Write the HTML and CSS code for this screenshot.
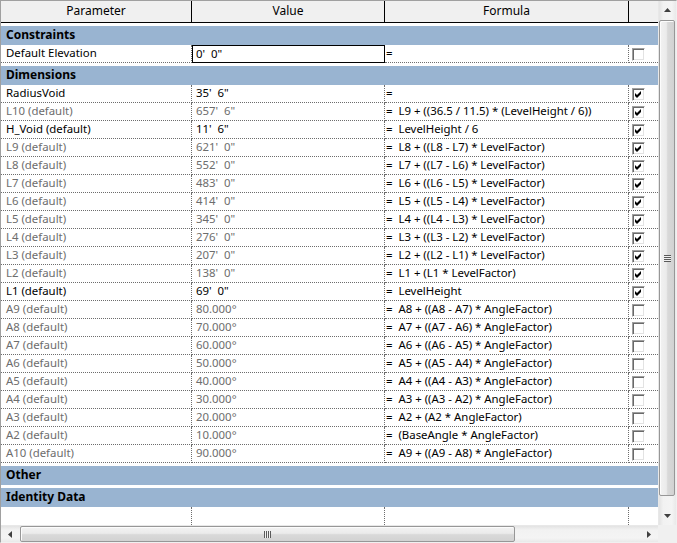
FILE: index.html
```html
<!DOCTYPE html>
<html>
<head>
<meta charset="utf-8">
<link rel="stylesheet" href="styles.css">
</head>
<body>
<div class="grid">
  <div class="main">
    <div class="table">
      <div class="head">
        <div class="h">Parameter</div>
        <div class="h">Value</div>
        <div class="h">Formula</div>
        <div class="h last"></div>
      </div>

      <div class="band">Constraints</div>
      <div class="row">
        <div class="c p">Default Elevation</div>
        <div class="c v edit">0'  0"</div>
        <div class="c f">=</div>
        <div class="c k"><span class="cb"></span></div>
      </div>

      <div class="band">Dimensions</div>
      <div class="row">
        <div class="c p">RadiusVoid</div>
        <div class="c v">35'  6"</div>
        <div class="c f">=</div>
        <div class="c k"><span class="cb"><svg viewBox="0 0 11 11" width="11" height="11"><polygon points="2,4 4,6 8,2 8,5 4,9 2,7"/></svg></span></div>
      </div>
      <div class="row gray">
        <div class="c p">L10 (default)</div>
        <div class="c v">657'  6"</div>
        <div class="c f">=  L9 + ((36.5 / 11.5) * (LevelHeight / 6))</div>
        <div class="c k"><span class="cb"><svg viewBox="0 0 11 11" width="11" height="11"><polygon points="2,4 4,6 8,2 8,5 4,9 2,7"/></svg></span></div>
      </div>
      <div class="row">
        <div class="c p">H_Void (default)</div>
        <div class="c v">11'  6"</div>
        <div class="c f">=  LevelHeight / 6</div>
        <div class="c k"><span class="cb"><svg viewBox="0 0 11 11" width="11" height="11"><polygon points="2,4 4,6 8,2 8,5 4,9 2,7"/></svg></span></div>
      </div>
      <div class="row gray">
        <div class="c p">L9 (default)</div>
        <div class="c v">621'  0"</div>
        <div class="c f">=  L8 + ((L8 - L7) * LevelFactor)</div>
        <div class="c k"><span class="cb"><svg viewBox="0 0 11 11" width="11" height="11"><polygon points="2,4 4,6 8,2 8,5 4,9 2,7"/></svg></span></div>
      </div>
      <div class="row gray">
        <div class="c p">L8 (default)</div>
        <div class="c v">552'  0"</div>
        <div class="c f">=  L7 + ((L7 - L6) * LevelFactor)</div>
        <div class="c k"><span class="cb"><svg viewBox="0 0 11 11" width="11" height="11"><polygon points="2,4 4,6 8,2 8,5 4,9 2,7"/></svg></span></div>
      </div>
      <div class="row gray">
        <div class="c p">L7 (default)</div>
        <div class="c v">483'  0"</div>
        <div class="c f">=  L6 + ((L6 - L5) * LevelFactor)</div>
        <div class="c k"><span class="cb"><svg viewBox="0 0 11 11" width="11" height="11"><polygon points="2,4 4,6 8,2 8,5 4,9 2,7"/></svg></span></div>
      </div>
      <div class="row gray">
        <div class="c p">L6 (default)</div>
        <div class="c v">414'  0"</div>
        <div class="c f">=  L5 + ((L5 - L4) * LevelFactor)</div>
        <div class="c k"><span class="cb"><svg viewBox="0 0 11 11" width="11" height="11"><polygon points="2,4 4,6 8,2 8,5 4,9 2,7"/></svg></span></div>
      </div>
      <div class="row gray">
        <div class="c p">L5 (default)</div>
        <div class="c v">345'  0"</div>
        <div class="c f">=  L4 + ((L4 - L3) * LevelFactor)</div>
        <div class="c k"><span class="cb"><svg viewBox="0 0 11 11" width="11" height="11"><polygon points="2,4 4,6 8,2 8,5 4,9 2,7"/></svg></span></div>
      </div>
      <div class="row gray">
        <div class="c p">L4 (default)</div>
        <div class="c v">276'  0"</div>
        <div class="c f">=  L3 + ((L3 - L2) * LevelFactor)</div>
        <div class="c k"><span class="cb"><svg viewBox="0 0 11 11" width="11" height="11"><polygon points="2,4 4,6 8,2 8,5 4,9 2,7"/></svg></span></div>
      </div>
      <div class="row gray">
        <div class="c p">L3 (default)</div>
        <div class="c v">207'  0"</div>
        <div class="c f">=  L2 + ((L2 - L1) * LevelFactor)</div>
        <div class="c k"><span class="cb"><svg viewBox="0 0 11 11" width="11" height="11"><polygon points="2,4 4,6 8,2 8,5 4,9 2,7"/></svg></span></div>
      </div>
      <div class="row gray">
        <div class="c p">L2 (default)</div>
        <div class="c v">138'  0"</div>
        <div class="c f">=  L1 + (L1 * LevelFactor)</div>
        <div class="c k"><span class="cb"><svg viewBox="0 0 11 11" width="11" height="11"><polygon points="2,4 4,6 8,2 8,5 4,9 2,7"/></svg></span></div>
      </div>
      <div class="row">
        <div class="c p">L1 (default)</div>
        <div class="c v">69'  0"</div>
        <div class="c f">=  LevelHeight</div>
        <div class="c k"><span class="cb"><svg viewBox="0 0 11 11" width="11" height="11"><polygon points="2,4 4,6 8,2 8,5 4,9 2,7"/></svg></span></div>
      </div>
      <div class="row gray">
        <div class="c p">A9 (default)</div>
        <div class="c v">80.000°</div>
        <div class="c f">=  A8 + ((A8 - A7) * AngleFactor)</div>
        <div class="c k"><span class="cb"></span></div>
      </div>
      <div class="row gray">
        <div class="c p">A8 (default)</div>
        <div class="c v">70.000°</div>
        <div class="c f">=  A7 + ((A7 - A6) * AngleFactor)</div>
        <div class="c k"><span class="cb"></span></div>
      </div>
      <div class="row gray">
        <div class="c p">A7 (default)</div>
        <div class="c v">60.000°</div>
        <div class="c f">=  A6 + ((A6 - A5) * AngleFactor)</div>
        <div class="c k"><span class="cb"></span></div>
      </div>
      <div class="row gray">
        <div class="c p">A6 (default)</div>
        <div class="c v">50.000°</div>
        <div class="c f">=  A5 + ((A5 - A4) * AngleFactor)</div>
        <div class="c k"><span class="cb"></span></div>
      </div>
      <div class="row gray">
        <div class="c p">A5 (default)</div>
        <div class="c v">40.000°</div>
        <div class="c f">=  A4 + ((A4 - A3) * AngleFactor)</div>
        <div class="c k"><span class="cb"></span></div>
      </div>
      <div class="row gray">
        <div class="c p">A4 (default)</div>
        <div class="c v">30.000°</div>
        <div class="c f">=  A3 + ((A3 - A2) * AngleFactor)</div>
        <div class="c k"><span class="cb"></span></div>
      </div>
      <div class="row gray">
        <div class="c p">A3 (default)</div>
        <div class="c v">20.000°</div>
        <div class="c f">=  A2 + (A2 * AngleFactor)</div>
        <div class="c k"><span class="cb"></span></div>
      </div>
      <div class="row gray">
        <div class="c p">A2 (default)</div>
        <div class="c v">10.000°</div>
        <div class="c f">=  (BaseAngle * AngleFactor)</div>
        <div class="c k"><span class="cb"></span></div>
      </div>
      <div class="row gray">
        <div class="c p">A10 (default)</div>
        <div class="c v">90.000°</div>
        <div class="c f">=  A9 + ((A9 - A8) * AngleFactor)</div>
        <div class="c k"><span class="cb"></span></div>
      </div>

      <div class="band">Other</div>
      <div class="band">Identity Data</div>
      <div class="row empty">
        <div class="c p"></div>
        <div class="c v"></div>
        <div class="c f"></div>
        <div class="c k"></div>
      </div>
    </div>

    <div class="vscroll">
      <div class="vbtn"><svg width="7" height="4" viewBox="0 0 7 4"><polygon points="0,4 3.5,0 7,4"/></svg></div>
      <div class="vthumb"><span class="grip-h"></span></div>
      <div class="vtrack"></div>
      <div class="vbtn"><svg width="7" height="4" viewBox="0 0 7 4"><polygon points="0,0 7,0 3.5,4"/></svg></div>
    </div>
  </div>

  <div class="hbar">
    <div class="hscroll">
      <div class="hbtn"><svg width="4" height="7" viewBox="0 0 4 7"><polygon points="4,0 0,3.5 4,7"/></svg></div>
      <div class="hthumb"><span class="grip-v"></span></div>
      <div class="htrack"></div>
      <div class="hbtn"><svg width="4" height="7" viewBox="0 0 4 7"><polygon points="0,0 4,3.5 0,7"/></svg></div>
    </div>
    <div class="corner"></div>
  </div>
</div>
</body>
</html>
```

FILE: styles.css
```css
* { box-sizing: border-box; }

body {
  margin: 0;
  font-family: "Noto Sans", "Open Sans", sans-serif;
  font-size: 11.4px;
  color: #000;
  background: #fff;
}

.grid {
  width: 677px;
  height: 543px;
  border: 1px solid;
  border-color: #a0a0a0 #f0f0f0 #f0f0f0 #a0a0a0;
  display: flex;
  flex-direction: column;
  background: #fff;
}

.main {
  display: flex;
  height: 524px;
}

.table {
  width: 657px;
  height: 524px;
  overflow: hidden;
}

.head,
.row {
  display: grid;
  grid-template-columns: 191px 193px 244px 29px;
}

.head {
  height: 22px;
  background: #f0f0f0;
  border-bottom: 1px solid #000;
}

.h {
  text-align: center;
  line-height: 20px;
  font-size: 12px;
  border-right: 1px solid #000;
}

.h.last { border-right: none; }

.band {
  margin-top: 3px;
  height: 19px;
  line-height: 18px;
  padding-left: 5px;
  background: #99b4d1;
  font-weight: bold;
  font-size: 12px;
}

.row { height: 18px; }

.c {
  height: 18px;
  line-height: 16px;
  border-right: 1px dotted #6d6d6d;
  border-bottom: 1px dotted #6d6d6d;
  white-space: pre;
  overflow: hidden;
}

.c.k { border-right: none; }

.p { padding-left: 5px; }
.v { padding-left: 4px; }
.f { padding-left: 1px; }

.v.edit {
  border: 1px solid #000;
  padding-left: 3px;
  line-height: 15px;
}

.row.gray .p,
.row.gray .v { color: #6d6d6d; }

.row.empty .c { border-bottom: none; }

.k { padding: 3px 0 0 3px; }

.cb {
  display: block;
  width: 13px;
  height: 13px;
  border: 1px solid;
  border-color: #a0a0a0 #fff #fff #a0a0a0;
  box-shadow: inset 1px 1px #696969, inset -1px -1px #e3e3e3;
  background: #fff;
}

.cb svg {
  display: block;
  fill: #000;
}

/* vertical scrollbar */
.vscroll {
  width: 18px;
  height: 524px;
  display: flex;
  flex-direction: column;
  background: linear-gradient(to right, #e3e3e3, #f2f2f2 25%, #f4f4f4 75%, #e9e9e9);
  border-left: 1px solid #e8e8e8;
}

.vbtn {
  height: 18px;
  display: flex;
  align-items: center;
  justify-content: center;
  flex: none;
}

.vbtn svg, .hbtn svg { fill: #404040; }

.vthumb {
  margin: 1px 1px 0 0;
  height: 476px;
  flex: none;
  border: 1px solid #979797;
  border-radius: 2px;
  background: linear-gradient(to right, #f2f2f2, #ebebeb 45%, #d9d9d9 55%, #d2d2d2);
  box-shadow: inset 1px 1px #fcfcfc;
  display: flex;
  align-items: center;
  justify-content: center;
}

.grip-h {
  display: block;
  width: 7px;
  height: 7px;
  background: repeating-linear-gradient(to bottom, #5a5a5a 0 1px, #f0f0f0 1px 2px);
}

.vtrack { flex: 1; }

/* horizontal scrollbar */
.hbar {
  display: flex;
  height: 17px;
}

.hscroll {
  width: 657px;
  display: flex;
  background: linear-gradient(to bottom, #e3e3e3, #f2f2f2 25%, #f4f4f4 75%, #e9e9e9);
  border-top: 1px solid #e8e8e8;
}

.hbtn {
  width: 18px;
  display: flex;
  align-items: center;
  justify-content: center;
  flex: none;
}

.hthumb {
  margin-left: 1px;
  width: 495px;
  flex: none;
  border: 1px solid #979797;
  border-radius: 2px;
  background: linear-gradient(to bottom, #f2f2f2, #ebebeb 45%, #d9d9d9 55%, #d2d2d2);
  box-shadow: inset 1px 1px #fcfcfc;
  display: flex;
  align-items: center;
  justify-content: center;
}

.grip-v {
  display: block;
  width: 7px;
  height: 7px;
  background: repeating-linear-gradient(to right, #5a5a5a 0 1px, #f0f0f0 1px 2px);
}

.htrack { flex: 1; }

.corner {
  width: 18px;
  background: #f0f0f0;
}
```
